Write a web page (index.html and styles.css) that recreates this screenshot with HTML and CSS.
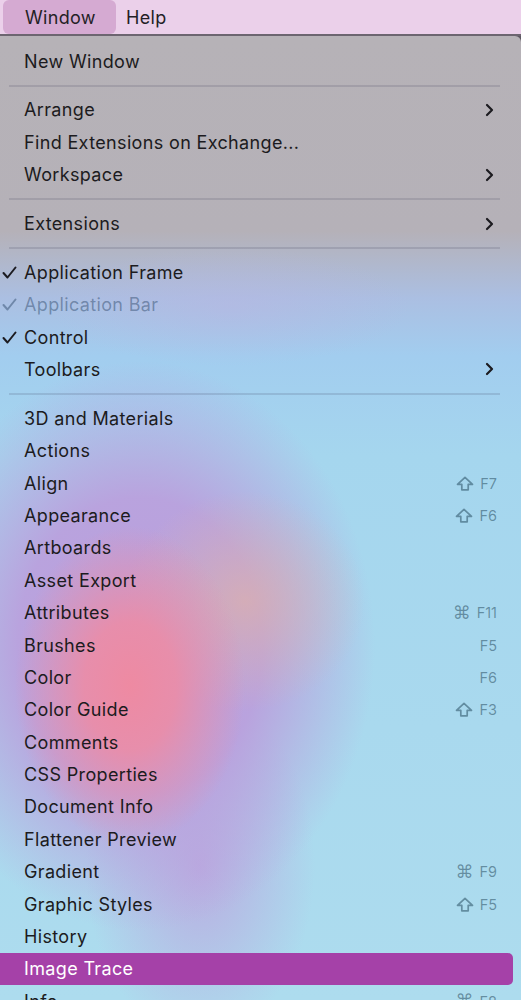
FILE: index.html
```html
<!DOCTYPE html>
<html lang="en">
<head>
<meta charset="utf-8">
<title>Window menu</title>
<link rel="stylesheet" href="styles.css">
</head>
<body>
<div class="screen">
  <div class="menubar">
    <div class="mb-item active">Window</div>
    <div class="mb-item">Help</div>
  </div>
  <div class="panel">
    <div class="row"><span class="label">New Window</span></div>
    <div class="sep"></div>
    <div class="row"><span class="label">Arrange</span><svg class="chev" viewBox="0 0 9 14"><path d="M2 2 L7 7 L2 12"/></svg></div>
    <div class="row"><span class="label">Find Extensions on Exchange...</span></div>
    <div class="row"><span class="label">Workspace</span><svg class="chev" viewBox="0 0 9 14"><path d="M2 2 L7 7 L2 12"/></svg></div>
    <div class="sep"></div>
    <div class="row"><span class="label">Extensions</span><svg class="chev" viewBox="0 0 9 14"><path d="M2 2 L7 7 L2 12"/></svg></div>
    <div class="sep"></div>
    <div class="row"><svg class="check" viewBox="0 0 15 13"><path d="M1.5 7 L5.5 11.5 L13.5 1.5"/></svg><span class="label">Application Frame</span></div>
    <div class="row disabled"><svg class="check" viewBox="0 0 15 13"><path d="M1.5 7 L5.5 11.5 L13.5 1.5"/></svg><span class="label">Application Bar</span></div>
    <div class="row"><svg class="check" viewBox="0 0 15 13"><path d="M1.5 7 L5.5 11.5 L13.5 1.5"/></svg><span class="label">Control</span></div>
    <div class="row"><span class="label">Toolbars</span><svg class="chev" viewBox="0 0 9 14"><path d="M2 2 L7 7 L2 12"/></svg></div>
    <div class="sep"></div>
    <div class="row"><span class="label">3D and Materials</span></div>
    <div class="row"><span class="label">Actions</span></div>
    <div class="row"><span class="label">Align</span><span class="key"><svg class="shift" viewBox="0 0 18 15"><path d="M9 1.3 L16.5 8.3 L12.2 8.3 L12.2 13.8 L5.8 13.8 L5.8 8.3 L1.5 8.3 Z"/></svg>F7</span></div>
    <div class="row"><span class="label">Appearance</span><span class="key"><svg class="shift" viewBox="0 0 18 15"><path d="M9 1.3 L16.5 8.3 L12.2 8.3 L12.2 13.8 L5.8 13.8 L5.8 8.3 L1.5 8.3 Z"/></svg>F6</span></div>
    <div class="row"><span class="label">Artboards</span></div>
    <div class="row"><span class="label">Asset Export</span></div>
    <div class="row"><span class="label">Attributes</span><span class="key"><span class="cmd">⌘</span>F11</span></div>
    <div class="row"><span class="label">Brushes</span><span class="key">F5</span></div>
    <div class="row"><span class="label">Color</span><span class="key">F6</span></div>
    <div class="row"><span class="label">Color Guide</span><span class="key"><svg class="shift" viewBox="0 0 18 15"><path d="M9 1.3 L16.5 8.3 L12.2 8.3 L12.2 13.8 L5.8 13.8 L5.8 8.3 L1.5 8.3 Z"/></svg>F3</span></div>
    <div class="row"><span class="label">Comments</span></div>
    <div class="row"><span class="label">CSS Properties</span></div>
    <div class="row"><span class="label">Document Info</span></div>
    <div class="row"><span class="label">Flattener Preview</span></div>
    <div class="row"><span class="label">Gradient</span><span class="key"><span class="cmd">⌘</span>F9</span></div>
    <div class="row"><span class="label">Graphic Styles</span><span class="key"><svg class="shift" viewBox="0 0 18 15"><path d="M9 1.3 L16.5 8.3 L12.2 8.3 L12.2 13.8 L5.8 13.8 L5.8 8.3 L1.5 8.3 Z"/></svg>F5</span></div>
    <div class="row"><span class="label">History</span></div>
    <div class="row selected"><span class="label">Image Trace</span></div>
    <div class="row"><span class="label">Info</span><span class="key"><span class="cmd">⌘</span>F8</span></div>
  </div>
</div>
</body>
</html>
```

FILE: styles.css
```css
html, body {
  margin: 0;
  padding: 0;
}
body {
  width: 521px;
  height: 1000px;
  overflow: hidden;
  background: #5d5862;
  font-family: Inter, "Liberation Sans", "DejaVu Sans", sans-serif;
  color: #1c1b20;
}
.screen {
  width: 521px;
  height: 1000px;
  overflow: hidden;
}
.menubar {
  height: 34px;
  background: #ebd0ea;
  border-bottom: 2px solid #6c6570;
  display: flex;
  align-items: stretch;
  padding-left: 3px;
  font-size: 18px;
  letter-spacing: 0.3px;
}
.mb-item {
  display: flex;
  align-items: center;
  padding: 0 10px;
  color: #241f26;
}
.mb-item.active {
  width: 113px;
  box-sizing: border-box;
  padding-left: 22px;
  background: #d5aad2;
  border-radius: 6px;
}
.panel {
  height: 964px;
  box-sizing: border-box;
  padding-top: 9px;
  border-top-right-radius: 6px;
  background:
    radial-gradient(ellipse 115px 160px at 130px 650px, rgba(238,138,162,1) 0%, rgba(236,140,166,0.9) 40%, rgba(225,150,185,0) 100%),
    radial-gradient(ellipse 120px 110px at 245px 565px, rgba(226,178,164,0.65) 0%, rgba(226,178,164,0) 100%),
    radial-gradient(ellipse 235px 285px at 140px 610px, rgba(186,158,220,1) 0%, rgba(186,160,221,0.95) 52%, rgba(180,175,228,0) 100%),
    radial-gradient(ellipse 115px 175px at 200px 830px, rgba(188,164,222,0.85) 0%, rgba(188,164,222,0) 100%),
    radial-gradient(ellipse 180px 60px at 230px 270px, rgba(186,180,226,0.45) 0%, rgba(186,180,226,0) 100%),
    linear-gradient(to bottom, #b6b2b7 0px, #b5b1b8 195px, #abbfe2 262px, #a2cdef 320px, #a5d6ee 420px, #addcee 964px);
}
.row {
  height: 32.4px;
  display: grid;
  grid-template-columns: 24px 1fr auto;
  align-items: center;
  padding-right: 24px;
  font-size: 18px;
  letter-spacing: 0.35px;
  white-space: nowrap;
}
.row .label {
  grid-column: 2;
}
.row .check {
  grid-column: 1;
  width: 15px;
  height: 13px;
  margin-left: 2px;
  fill: none;
  stroke: #1c1b20;
  stroke-width: 2;
  stroke-linecap: round;
  stroke-linejoin: round;
}
.row.disabled {
  color: rgba(40, 66, 100, 0.45);
}
.row.disabled .check {
  stroke: rgba(40, 66, 100, 0.45);
}
.chev {
  grid-column: 3;
  width: 9px;
  height: 14px;
  margin-right: 3px;
  fill: none;
  stroke: #1c1b20;
  stroke-width: 2.2;
  stroke-linecap: round;
  stroke-linejoin: round;
}
.key {
  grid-column: 3;
  display: flex;
  align-items: center;
  gap: 6px;
  font-size: 14.5px;
  letter-spacing: 0;
  color: rgba(20, 55, 75, 0.47);
}
.shift {
  width: 18px;
  height: 15px;
  fill: none;
  stroke: rgba(20, 55, 75, 0.47);
  stroke-width: 1.7;
  stroke-linejoin: round;
}
.cmd {
  font-family: "DejaVu Sans", sans-serif;
  font-size: 18px;
  line-height: 1;
}
.sep {
  height: 16.4px;
  display: flex;
  align-items: center;
  padding: 0 21px 0 9px;
}
.sep::before {
  content: "";
  display: block;
  flex: 1;
  height: 2px;
  background: rgba(40, 40, 70, 0.14);
}
.row.selected {
  background: #a541a8;
  color: #ffffff;
  border-radius: 0 5px 5px 0;
  margin-right: 8px;
}
```
